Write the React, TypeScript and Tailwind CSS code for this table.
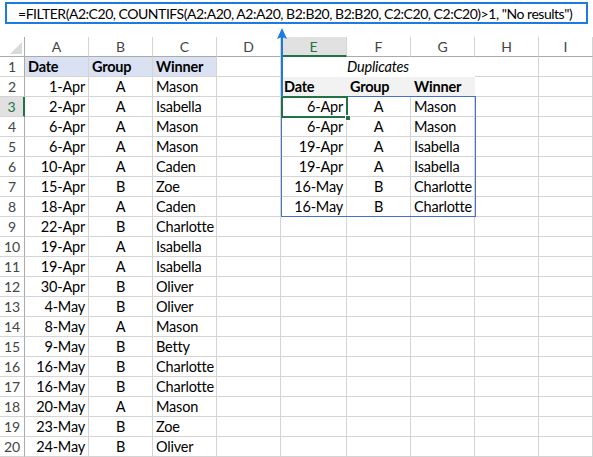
import React from "react";

const W = [64, 64, 64, 64, 66, 64, 64, 64, 54];
const LETTERS = ["A", "B", "C", "D", "E", "F", "G", "H", "I"];

const left: [string, string, string][] = [
  ["1-Apr", "A", "Mason"],
  ["2-Apr", "A", "Isabella"],
  ["6-Apr", "A", "Mason"],
  ["6-Apr", "A", "Mason"],
  ["10-Apr", "A", "Caden"],
  ["15-Apr", "B", "Zoe"],
  ["18-Apr", "A", "Caden"],
  ["22-Apr", "B", "Charlotte"],
  ["19-Apr", "A", "Isabella"],
  ["19-Apr", "A", "Isabella"],
  ["30-Apr", "B", "Oliver"],
  ["4-May", "B", "Oliver"],
  ["8-May", "A", "Mason"],
  ["9-May", "B", "Betty"],
  ["16-May", "B", "Charlotte"],
  ["16-May", "B", "Charlotte"],
  ["20-May", "A", "Mason"],
  ["23-May", "B", "Zoe"],
  ["24-May", "B", "Oliver"],
];

const dup: [string, string, string][] = [
  ["6-Apr", "A", "Mason"],
  ["6-Apr", "A", "Mason"],
  ["19-Apr", "A", "Isabella"],
  ["19-Apr", "A", "Isabella"],
  ["16-May", "B", "Charlotte"],
  ["16-May", "B", "Charlotte"],
];

function Cell({
  w,
  children,
  className = "",
}: {
  w: number;
  children?: React.ReactNode;
  className?: string;
}) {
  return (
    <div
      style={{ width: w }}
      className={`h-[20px] shrink-0 border-r border-b border-[#d4d4d4] flex items-center overflow-visible whitespace-nowrap ${className}`}
    >
      {children}
    </div>
  );
}

function RowHeader({ n }: { n: number }) {
  const sel = n === 3;
  return (
    <div
      className={`w-[25px] h-[20px] shrink-0 flex items-center justify-center border-b border-[#d4d4d4] text-[14px] tracking-normal ${
        sel
          ? "bg-[#e1e1e1] border-r-2 border-r-[#217346] text-[#217346]"
          : "border-r border-r-[#ababab] text-[#444]"
      }`}
    >
      {n}
    </div>
  );
}

export default function App() {
  const rows = [];
  for (let r = 1; r <= 20; r++) {
    const cells: React.ReactNode[] = [];
    if (r === 1) {
      ["Date", "Group", "Winner"].forEach((t, i) => {
        cells.push(
          <Cell key={"h" + i} w={W[i]} className="bg-[#d9e1f2] font-bold pl-[3px] text-black">
            {t}
          </Cell>
        );
      });
    } else {
      const d = left[r - 2];
      cells.push(
        <Cell key="a" w={W[0]} className="justify-end pr-[3px]">
          {d[0]}
        </Cell>
      );
      cells.push(
        <Cell key="b" w={W[1]} className="justify-center">
          {d[1]}
        </Cell>
      );
      cells.push(
        <Cell key="c" w={W[2]} className="pl-[3px]">
          {d[2]}
        </Cell>
      );
    }
    cells.push(<Cell key="d" w={W[3]} />);
    if (r === 1) {
      cells.push(
        <div
          key="dup"
          style={{ width: W[4] + W[5] + W[6] }}
          className="h-[20px] shrink-0 flex items-center justify-center italic"
        >
          Duplicates
        </div>
      );
    } else if (r === 2) {
      ["Date", "Group", "Winner"].forEach((t, i) => {
        cells.push(
          <div
            key={"eh" + i}
            style={{ width: W[4 + i] }}
            className="h-[20px] shrink-0 flex items-center bg-[#f2f2f2] font-bold pl-[3px]"
          >
            {t}
          </div>
        );
      });
    } else if (r >= 3 && r <= 8) {
      const d = dup[r - 3];
      cells.push(
        <Cell key="e" w={W[4]} className="justify-end pr-[3px]">
          {d[0]}
        </Cell>
      );
      cells.push(
        <Cell key="f" w={W[5]} className="justify-center">
          {d[1]}
        </Cell>
      );
      cells.push(
        <Cell key="g" w={W[6]} className="pl-[3px]">
          {d[2]}
        </Cell>
      );
    } else {
      cells.push(<Cell key="e" w={W[4]} />);
      cells.push(<Cell key="f" w={W[5]} />);
      cells.push(<Cell key="g" w={W[6]} />);
    }
    cells.push(<Cell key="h" w={W[7]} />);
    cells.push(<Cell key="i" w={W[8]} />);
    rows.push(
      <div key={r} className="flex">
        <RowHeader n={r} />
        {cells}
      </div>
    );
  }

  return (
    <div
      className="relative w-[593px] h-[457px] overflow-hidden bg-white text-[14.5px] tracking-[-0.2px] text-black"
      style={{ fontFamily: "Lato, 'Open Sans', sans-serif" }}
    >
      {/* Formula bar */}
      <div className="h-[37px] pl-[5px] pt-[2px]">
        <div className="w-[583px] h-[22px] border-2 border-[#1a7ce2] flex items-center pl-[11px] text-[14px] tracking-[-0.47px] whitespace-nowrap">
          =FILTER(A2:C20, COUNTIFS(A2:A20, A2:A20, B2:B20, B2:B20, C2:C20, C2:C20)&gt;1, "No results")
        </div>
      </div>

      {/* Column headers */}
      <div className="flex h-[20px] tracking-normal">
        <div className="relative w-[25px] h-[20px] shrink-0 border-r border-b border-[#ababab]">
          <div className="absolute right-[2px] bottom-[2px] w-0 h-0 border-l-[12px] border-l-transparent border-b-[12px] border-b-[#dadada]" />
        </div>
        {LETTERS.map((l, i) => (
          <div
            key={l}
            style={{ width: W[i] }}
            className={`h-[20px] shrink-0 flex items-center justify-center text-[14px] ${
              l === "E"
                ? "bg-[#e1e1e1] border-b-2 border-b-[#217346] border-r border-r-[#d4d4d4] text-[#217346]"
                : "border-r border-r-[#d4d4d4] border-b border-b-[#ababab] text-[#444]"
            }`}
          >
            {l}
          </div>
        ))}
      </div>

      {rows}

      {/* Duplicates table outline */}
      <div className="absolute left-[281px] top-[96px] w-[195px] h-[121px] border border-[#4472c4] pointer-events-none" />

      {/* Selected cell E3 */}
      <div className="absolute left-[281px] top-[96px] w-[67px] h-[22px] border-2 border-[#217346] pointer-events-none" />
      <div className="absolute left-[345px] top-[115px] w-[6px] h-[6px] bg-[#217346] border border-white" />

      {/* Arrow */}
      <svg
        className="absolute left-[272px] top-[24px]"
        width="20"
        height="74"
        viewBox="0 0 20 74"
      >
        <line x1="10" y1="10" x2="10" y2="73" stroke="#1a7ce2" strokeWidth="2" />
        <path d="M10 4 L15 15 L10 13 L5 15 Z" fill="#1a7ce2" />
      </svg>
    </div>
  );
}
